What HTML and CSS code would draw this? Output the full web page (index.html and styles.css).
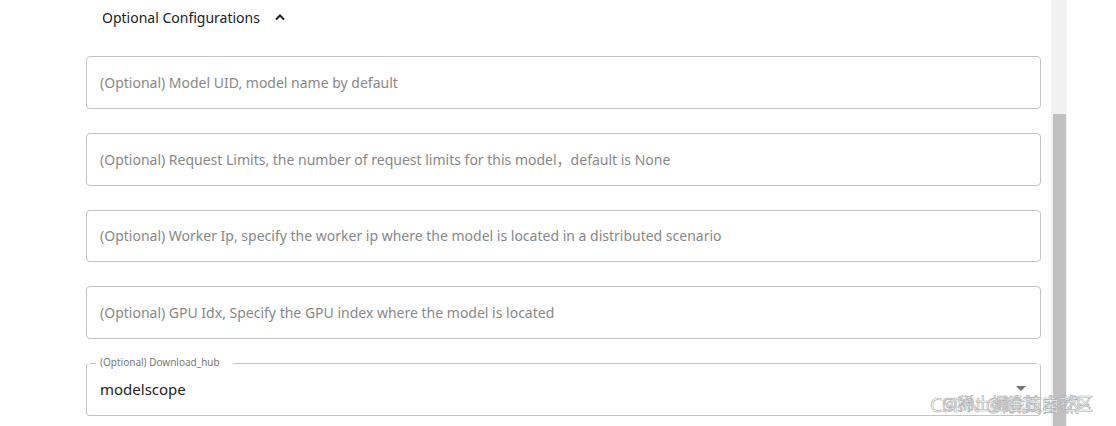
FILE: index.html
```html
<!DOCTYPE html>
<html lang="en">
<head>
	<meta charset="UTF-8">
	<title>Optional Configurations</title>
	<link rel="stylesheet" href="styles.css">
</head>
<body>
	<div class="page">
		<div class="panel">
			<div class="head">
				<span>Optional Configurations</span>
				<svg class="chev" width="12" height="8" viewBox="0 0 12 8"><path d="M2 6.5 6 2.5l4 4" fill="none" stroke="#222" stroke-width="2"/></svg>
			</div>
			<div class="form">
				<div class="field"><span class="ph">(Optional) Model UID, model name by default</span></div>
				<div class="field"><span class="ph">(Optional) Request Limits, the number of request limits for this model，default is None</span></div>
				<div class="field"><span class="ph">(Optional) Worker Ip, specify the worker ip where the model is located in a distributed scenario</span></div>
				<div class="field"><span class="ph">(Optional) GPU Idx, Specify the GPU index where the model is located</span></div>
				<div class="field select">
					<span class="label">(Optional) Download_hub</span>
					<span class="val">modelscope</span>
					<svg class="arrow" width="10" height="6" viewBox="0 0 10 6"><path d="M0 0h10L5 5z" fill="#757575"/></svg>
				</div>
			</div>
		</div>
		<div class="track"><div class="thumb"></div></div>
		<div class="side"></div>
	</div>
	<div class="mark">
		<span class="m1">CSDN @顺其自然~</span>
		<span class="m2">@稀土掘金技术社区</span>
	</div>
</body>
</html>
```

FILE: styles.css
```css
*{
	margin: 0;
	padding: 0;
	box-sizing: border-box;
}
body{
	font-family: "Noto Sans", "Noto Sans CJK SC", sans-serif;
	background: #fff;
	width: 1116px;
	height: 426px;
	overflow: hidden;
	position: relative;
}
.page{
	display: flex;
	height: 426px;
}
.panel{
	width: 1051px;
	padding-left: 86px;
}
.head{
	height: 34px;
	display: flex;
	align-items: center;
	padding-left: 16px;
	font-size: 14px;
	color: #222;
}
.chev{
	margin-left: 14px;
	margin-top: -1px;
}
.form{
	width: 955px;
	margin-top: 22px;
	display: flex;
	flex-direction: column;
	gap: 24px;
}
.field{
	height: 52.75px;
	border: 1px solid #c4c4c4;
	border-radius: 4px;
	display: flex;
	align-items: center;
	padding-left: 13px;
	position: relative;
}
.ph{
	font-size: 14px;
	color: #888;
}
.select{
	border-top-color: transparent;
}
.select::before{
	content: "";
	position: absolute;
	top: -1px;
	left: 146px;
	right: 3px;
	border-top: 1px solid #c4c4c4;
}
.select::after{
	content: "";
	position: absolute;
	top: -1px;
	left: 3px;
	width: 6px;
	border-top: 1px solid #c4c4c4;
}
.label{
	position: absolute;
	top: -9px;
	left: 13px;
	font-size: 10px;
	color: #777;
}
.val{
	font-size: 15px;
	color: #222;
}
.arrow{
	position: absolute;
	right: 14px;
	top: 22px;
}
.track{
	width: 16px;
	background: #f1f1f1;
	padding: 114px 1px 0 2px;
}
.thumb{
	height: 320px;
	background: #c1c1c1;
}
.side{
	flex: 1;
}
.mark{
	position: absolute;
	left: 930px;
	top: 390px;
	width: 186px;
	height: 30px;
	color: rgba(255,255,255,.85);
	-webkit-text-stroke: 0.6px #aaa;
	white-space: nowrap;
}
.mark span{
	position: absolute;
	top: 0;
}
.m1{
	left: 0;
	font-size: 19px;
}
.m2{
	left: 12px;
	top: 1px;
	font-size: 17px;
}
```
